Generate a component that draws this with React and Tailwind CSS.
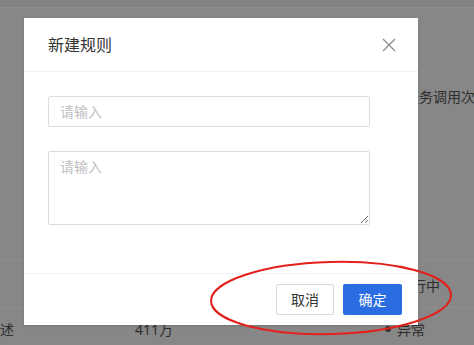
const font = { fontFamily: '"Noto Sans", "Noto Sans CJK SC", sans-serif' };

const BackgroundTable = () => (
    <div className="flex flex-col h-full text-[14px] text-[#2e2e2e]">
        <div className="h-[8px] bg-[#828282] border-b border-[#8d8d8d]" />
        <div className="h-[253px] pt-[78px] pl-[405px] whitespace-nowrap border-b border-[#8e8e8e]">
            服务调用次数
        </div>
        <div className="h-[47px] pt-[14px] pl-[398px] whitespace-nowrap border-b border-[#8e8e8e]">
            运行中
        </div>
        <div className="flex items-center h-[36px] pt-[6px] whitespace-nowrap">
            <span className="w-[149px] -ml-[14px] shrink-0">描述</span>
            <span className="w-[250px] shrink-0">411万</span>
            <span className="flex items-center gap-[6px]">
                <span className="w-[6px] h-[6px] rounded-full bg-[#2e2e2e]" />
                异常
            </span>
        </div>
    </div>
);

const Modal = () => (
    <div className="absolute left-[24px] top-[18px] w-[394px] h-[307px] bg-white flex flex-col shadow-sm">
        {/* header */}
        <div className="flex items-center justify-between h-[54px] pl-[24px] pr-[22px] border-b border-[#f0f0f0]">
            <span className="text-[16px] text-[#333]">新建规则</span>
            <svg className="w-[14px] h-[14px]" viewBox="0 0 14 14" fill="none" stroke="#8c8c8c" strokeWidth="1.3">
                <path d="M1 1l12 12M13 1L1 13" />
            </svg>
        </div>

        {/* body */}
        <div className="flex-1 flex flex-col gap-[24px] pt-[24px] pl-[24px] pr-[48px]">
            <input
                className="h-[31px] w-full border border-[#dcdcdc] rounded-[2px] px-[11px] text-[14px] outline-none placeholder:text-[#c0c0c0]"
                placeholder="请输入"
                style={font}
            />
            <textarea
                className="h-[74px] w-full border border-[#dcdcdc] rounded-[2px] px-[11px] py-[4px] text-[14px] outline-none resize-y placeholder:text-[#c0c0c0]"
                placeholder="请输入"
                style={font}
            />
        </div>

        {/* footer */}
        <div className="flex justify-end items-center gap-[9px] h-[52px] pr-[16px] pb-[1px] border-t border-[#f0f0f0]">
            <button className="w-[58px] h-[31px] border border-[#d9d9d9] rounded-[2px] bg-white text-[14px] text-[#333]">
                取消
            </button>
            <button className="w-[59px] h-[31px] rounded-[2px] bg-[#2a6de3] text-[14px] text-white">
                确定
            </button>
        </div>
    </div>
);

export default function App() {
    return (
        <div className="relative w-[474px] h-[345px] overflow-hidden bg-[#878787]" style={font}>
            <BackgroundTable />
            <Modal />
            {/* red annotation ellipse */}
            <svg className="absolute left-0 top-0 pointer-events-none" width="474" height="345" viewBox="0 0 474 345">
                <ellipse cx="331" cy="298" rx="120" ry="36" fill="none" stroke="#e3211c" strokeWidth="2" transform="rotate(-1.5 331 298)" />
            </svg>
        </div>
    );
}
